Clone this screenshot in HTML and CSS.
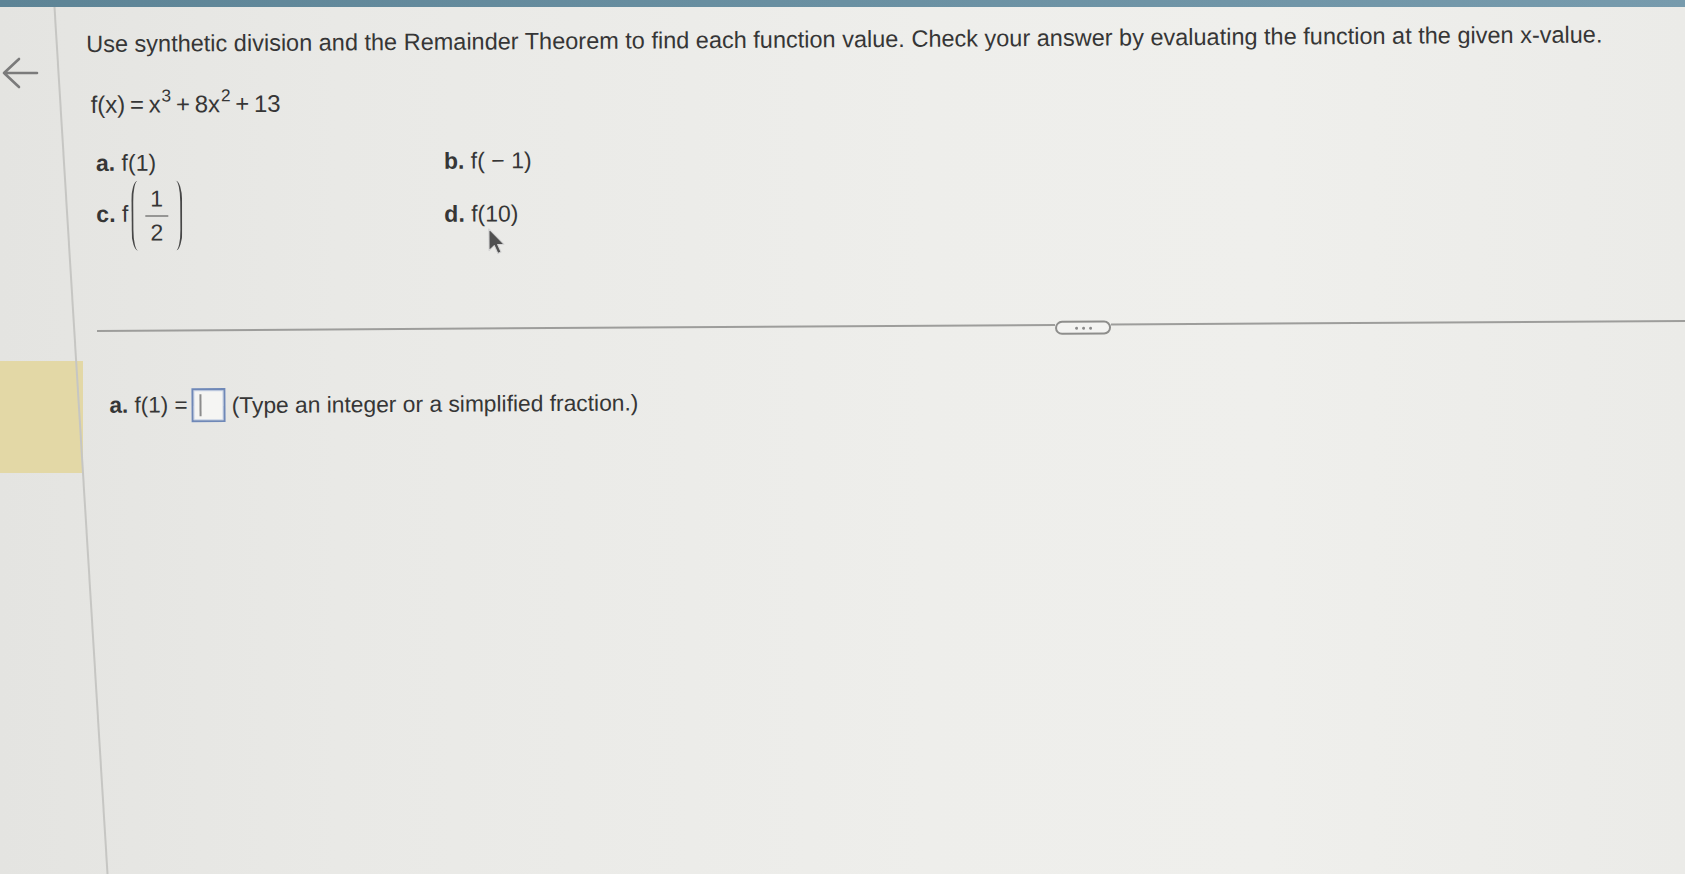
FILE: index.html
```html
<!DOCTYPE html>
<html lang="en">
<head>
<meta charset="utf-8">
<title>Synthetic division</title>
<link rel="stylesheet" href="styles.css">
</head>
<body>
<div class="topbar"></div>
<div class="screen">
  <aside class="sidebar">
    <svg class="back" viewBox="0 0 38 32" aria-label="Back">
      <path d="M36 16 H3 M18 2 L3 16 L18 30" fill="none" stroke="#7b7b7b" stroke-width="2.6" stroke-linecap="round" stroke-linejoin="round"/>
    </svg>
    <div class="highlight"></div>
  </aside>
  <main class="main">
    <p class="question">Use synthetic division and the Remainder Theorem to find each function value. Check your answer by evaluating the function at the given x-value.</p>
    <p class="formula">f(x) = x<sup>3</sup> + 8x<sup>2</sup> + 13</p>
    <div class="parts">
      <div class="part"><b>a.</b> f(1)</div>
      <div class="part"><b>b.</b> f( − 1)</div>
      <div class="part"><b>c.</b> f<span class="pfrac"><span class="lp"></span><span class="frac"><span class="num">1</span><span class="den">2</span></span><span class="rp"></span></span></div>
      <div class="part part-d"><b>d.</b> f(10)
        <svg class="cursor" viewBox="0 0 12 20" aria-hidden="true">
          <path d="M1 1 V16.5 L4.8 13 L7.3 18.6 L9.6 17.6 L7.2 12.2 H11.8 Z" fill="#505050" stroke="#d6d6d6" stroke-width="0.8" stroke-linejoin="round"/>
        </svg>
      </div>
    </div>
    <div class="divider">
      <span class="rule rule-left"></span>
      <button class="more" type="button" aria-label="More"><i></i><i></i><i></i></button>
      <span class="rule rule-right"></span>
    </div>
    <div class="answer">
      <span class="ans-label"><b>a.</b> f(1) =</span>
      <span class="input"><span class="caret"></span></span>
      <span class="hint">(Type an integer or a simplified fraction.)</span>
    </div>
  </main>
</div>
</body>
</html>
```

FILE: styles.css
```css
html, body {
  margin: 0;
  height: 874px;
  overflow: hidden;
}
body {
  font-family: "Liberation Sans", Arial, sans-serif;
  color: #363636;
  background: linear-gradient(90deg, #e4e4e1 0%, #e9e9e6 20%, #eeeeeb 55%, #efefec 75%, #ebebe8 100%);
  display: flex;
  flex-direction: column;
}
.topbar {
  flex: none;
  height: 7px;
  background: linear-gradient(90deg, #5d8496 0%, #6a90a2 50%, #779bad 100%);
}
.screen {
  flex: 1;
  display: flex;
}
.sidebar {
  flex: none;
  width: 84px;
  position: relative;
  display: flex;
  flex-direction: column;
}
.sidebar::after {
  content: "";
  position: absolute;
  top: 0;
  bottom: 0;
  left: 80px;
  width: 1.5px;
  background: #c6c6c3;
  transform: skewX(3.5deg);
}
.back {
  width: 38px;
  height: 32px;
  margin: 50px 0 0 1px;
}
.highlight {
  width: 83px;
  height: 112px;
  margin-top: 272px;
  background: #e3d8a6;
}
.main {
  flex: 1;
  min-width: 0;
  padding-left: 2px;
  transform: rotate(-0.36deg);
  transform-origin: 0 0;
}
.question {
  margin: 23px 0 0;
  font-size: 23.5px;
  line-height: 28px;
  white-space: nowrap;
}
.formula {
  margin: 32px 0 0 4px;
  font-size: 24px;
  line-height: 30px;
  word-spacing: -2px;
}
.formula sup {
  font-size: 0.72em;
  line-height: 0;
  vertical-align: 0.62em;
  margin-left: 1px;
}
.parts {
  display: grid;
  grid-template-columns: 348px auto;
  grid-template-rows: 30px 72px;
  row-gap: 2px;
  margin: 28px 0 0 9px;
  font-size: 23px;
  line-height: 30px;
  align-items: center;
}
.part b {
  font-weight: bold;
}
.pfrac {
  display: inline-flex;
  align-items: center;
  vertical-align: middle;
  margin-left: 3px;
}
.lp, .rp {
  width: 11px;
  height: 70px;
  box-sizing: border-box;
  border: 0 solid #474747;
}
.lp {
  border-left-width: 2px;
  border-radius: 60% 0 0 60% / 30% 0 0 30%;
}
.rp {
  border-right-width: 2px;
  border-radius: 0 60% 60% 0 / 0 30% 30% 0;
}
.frac {
  display: inline-flex;
  flex-direction: column;
  align-items: center;
  margin: 0 3px;
  font-size: 23px;
  line-height: 33px;
}
.num {
  border-bottom: 1.5px solid #474747;
  padding: 0 5px;
}
.part-d {
  position: relative;
}
.cursor {
  position: absolute;
  left: 43px;
  top: 29px;
  width: 17px;
  height: 28px;
}
.divider {
  display: flex;
  align-items: center;
  height: 14px;
  margin: 72px 0 0 9px;
}
.rule {
  height: 1.5px;
  background: #9d9d9b;
}
.rule-left {
  flex: none;
  width: 958px;
}
.rule-right {
  flex: 1;
}
.more {
  flex: none;
  width: 56px;
  height: 14px;
  margin-top: 6px;
  box-sizing: border-box;
  padding: 0;
  border: 2px solid #8e8e8c;
  border-radius: 8px;
  background: #f3f3f1;
  display: flex;
  align-items: center;
  justify-content: center;
  gap: 4px;
}
.more i {
  width: 3px;
  height: 3px;
  border-radius: 50%;
  background: #8a8a8a;
}
.answer {
  display: flex;
  align-items: center;
  height: 34px;
  margin: 51px 0 0 21px;
  font-size: 22.5px;
}
.input {
  flex: none;
  width: 34px;
  height: 34px;
  box-sizing: border-box;
  margin: 0 6px 0 4px;
  border: 2px solid #6f88b7;
  box-shadow: inset 0 0 0 1px #c8d2e5;
  background: #f5f5f3;
  display: flex;
  align-items: center;
  padding-left: 6px;
}
.caret {
  width: 1.5px;
  height: 22px;
  background: #8c8c8c;
}
.hint {
  font-size: 22.8px;
}
```
